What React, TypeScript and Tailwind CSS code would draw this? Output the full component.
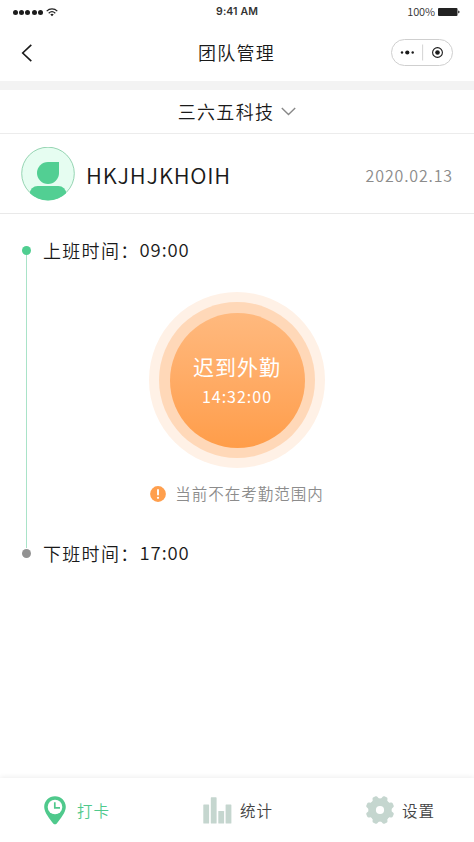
import { useState } from "react";

const TABS = [
    { id: "punch", label: "打卡", icon: PinIcon, pos: "ml-[43px] w-[179px]", gap: "gap-[11px]" },
    { id: "stats", label: "统计", icon: BarsIcon, pos: "-ml-[19px] w-[163px]", gap: "gap-2" },
    { id: "settings", label: "设置", icon: GearIcon, pos: "", gap: "gap-2" },
];

function WifiIcon() {
    return (
        <svg width="12" height="9" viewBox="0 0 12 9" fill="none" stroke="#222" strokeWidth="1.2" className="ml-0.5">
            <path d="M0.7 3.2C3.7 0.2 8.3 0.2 11.3 3.2" />
            <path d="M2.7 5.2C4.6 3.4 7.4 3.4 9.3 5.2" />
            <path d="M4.3 6.4C5.2 5.6 6.8 5.6 7.7 6.4L6 8.3Z" fill="#222" stroke="none" />
        </svg>
    );
}

function PinIcon({ color }) {
    return (
        <svg width="22" height="29" viewBox="0 0 22 29" fill="none" className="ml-px">
            <path d="M11 0.3C5 0.3 0.2 5 0.2 10.9C0.2 16.5 5.8 22.6 9.2 27.4Q11 29.3 12.8 27.4C16.2 22.6 21.8 16.5 21.8 10.9C21.8 5 17 0.3 11 0.3Z" fill={color} />
            <circle cx="11" cy="11" r="7.3" fill="#fff" />
            <path d="M10.8 6.2V11.8H16" stroke={color} strokeWidth="1.7" />
        </svg>
    );
}

function BarsIcon({ color }) {
    return (
        <svg width="29" height="27" viewBox="0 0 29 27" fill={color}>
            <rect x="0.3" y="7.5" width="5.8" height="19" rx="0.6" />
            <rect x="7.8" y="0.3" width="5.8" height="26.2" rx="0.6" />
            <rect x="15.3" y="14" width="5.8" height="12.5" rx="0.6" />
            <rect x="22.6" y="7.5" width="5.8" height="19" rx="0.6" />
        </svg>
    );
}

function GearIcon({ color }) {
    return (
        <svg width="28" height="28" viewBox="-14 -14 28 28" fill={color}>
            <circle r="11.5" />
            {[22.5, 67.5, 112.5, 157.5, 202.5, 247.5, 292.5, 337.5].map((a) => (
                <path key={a} transform={`rotate(${a})`} d="M-4.8 -10Q-3.1 -10.8 -2.8 -12.6Q-2.5 -14.3 -1.1 -14.3H1.1Q2.5 -14.3 2.8 -12.6Q3.1 -10.8 4.8 -10Z" />
            ))}
            <circle r="4.1" fill="#fff" />
        </svg>
    );
}

function Avatar() {
    return (
        <svg width="54" height="54" viewBox="0 0 54 54">
            <defs>
                <clipPath id="avatar-clip"><circle cx="27" cy="27" r="26.4" /></clipPath>
            </defs>
            <circle cx="27" cy="26.5" r="26.3" fill="#e6fdf1" stroke="#7cc9a0" strokeWidth="0.8" />
            <path d="M38 15H27A11 11 0 1 0 38 26Z" fill="#52cf93" />
            <rect x="8.7" y="38.9" width="36.6" height="20" rx="8" fill="#52cf93" clipPath="url(#avatar-clip)" />
        </svg>
    );
}

function StatusBar() {
    return (
        <div className="grid h-6 grid-cols-3 items-center pl-[13px] pr-[14px]">
            <div className="flex items-center gap-[1.2px]">
                {[0, 1, 2, 3, 4].map((i) => (
                    <span key={i} className="h-[5px] w-[5px] rounded-full bg-[#1c1c1c]" />
                ))}
                <WifiIcon />
            </div>
            <div className="pl-px text-center font-[Inter] text-[10.5px] font-semibold tracking-[0.1px] text-[#333]">9:41 AM</div>
            <div className="flex items-center justify-end gap-[3px] text-[11px] leading-3 text-[#333]">
                <span className="-mt-0.5 tracking-[-0.1px]">100%</span>
                <svg width="22" height="8" viewBox="0 0 22 8" fill="#222">
                    <rect width="19.5" height="8" rx="1" />
                    <path d="M20.2 2.6Q21.6 3 21.6 4T20.2 5.4Z" />
                </svg>
            </div>
        </div>
    );
}

function Header() {
    return (
        <header className="grid h-[57px] grid-cols-[80px_1fr_80px] items-center">
            <button type="button" aria-label="返回" className="pl-[21px]">
                <svg width="12" height="18" viewBox="0 0 12 18" fill="none" stroke="#1a1a1a" strokeWidth="1.6">
                    <path d="M10.3 0.8L1.7 9L10.3 17.2" />
                </svg>
            </button>
            <h1 className="pr-px text-center text-[18px] font-[350] tracking-[1.3px] text-[#1a1a1a]">团队管理</h1>
            <div className="-ml-[3px] flex h-[27px] w-[62px] items-center rounded-full border border-[#cfcfcf]">
                <svg width="60" height="25" viewBox="0 0 60 25" fill="#1a1a1a">
                    <circle cx="10" cy="12.5" r="1.2" />
                    <circle cx="15.3" cy="12.5" r="2.1" />
                    <circle cx="20.7" cy="12.5" r="1.2" />
                    <rect x="30.3" y="4.5" width="0.8" height="16" fill="#c8c8c8" />
                    <circle cx="45.5" cy="12.5" r="4.9" fill="none" stroke="#1a1a1a" strokeWidth="1.1" />
                    <circle cx="45.5" cy="12.5" r="2.3" />
                </svg>
            </div>
        </header>
    );
}

function ShiftRow({ label, time, dot }) {
    return (
        <div className="flex h-6 items-center text-[18px] text-[#1a1a1a]">
            <span className={`h-[9px] w-[9px] rounded-full ${dot}`} />
            <span className="ml-3 tracking-[1.3px]">{label}：</span>
            <span className="text-[18.5px] tracking-[0.9px]">{time}</span>
        </div>
    );
}

export default function App() {
    const [active, setActive] = useState("punch");

    return (
        <div className="flex h-[842px] w-[474px] flex-col overflow-hidden bg-white font-['Noto_Sans_CJK_SC',sans-serif] font-[350]">
            <StatusBar />
            <Header />
            <div className="h-[9px] bg-[#f3f3f3]" />

            <button type="button" className="flex h-11 items-center justify-center gap-[7px] border-b border-[#ececec] text-[18px] tracking-[1.3px] text-[#1a1a1a]">
                三六五科技
                <svg width="15" height="9" viewBox="0 0 15 9" fill="none" stroke="#888" strokeWidth="1.4">
                    <path d="M0.8 0.9L7.5 7.6L14.2 0.9" />
                </svg>
            </button>

            <section className="flex h-20 items-center border-b border-[#e9e9e9] pl-[21px] pr-[21px]">
                <Avatar />
                <span className="ml-[11px] mt-0.5 text-[22px] tracking-[0.75px] text-[#1a1a1a]">HKJHJKHOIH</span>
                <span className="ml-auto mt-0.5 text-[16px] tracking-[0.85px] text-[#8c8c8c]">2020.02.13</span>
            </section>

            <main className="flex flex-1 flex-col px-[22px] pt-6">
                <ShiftRow label="上班时间" time="09:00" dot="bg-[#4fce90]" />
                <div className="-my-[7px] ml-1 flex h-[293px] flex-col items-center border-l border-[#a9e3c8] pr-[5px]">
                    <div className="mt-[37px] flex h-[176px] w-[176px] items-center justify-center rounded-full bg-[#fff1e6]">
                        <div className="flex h-[156px] w-[156px] items-center justify-center rounded-full bg-[#ffd8b8]">
                            <button type="button" className="flex h-[135px] w-[135px] flex-col items-center justify-center rounded-full bg-linear-to-b from-[#ffb97e] to-[#ff9d49] pt-px text-white">
                                <span className="text-[21px] leading-[30px] font-normal tracking-[1px]">迟到外勤</span>
                                <span className="text-[16px] leading-[30px] font-normal tracking-[1px]">14:32:00</span>
                            </button>
                        </div>
                    </div>
                    <p className="mt-[14px] flex items-center gap-[9px] text-[15.5px] tracking-[1px] text-[#8c8c8c]">
                        <svg width="16" height="16" viewBox="0 0 16 16">
                            <circle cx="8" cy="8" r="7.9" fill="#ff9f4d" />
                            <path d="M8 4V8.6" stroke="#fff" strokeWidth="1.9" strokeLinecap="round" />
                            <circle cx="8" cy="11.8" r="1.1" fill="#fff" />
                        </svg>
                        当前不在考勤范围内
                    </p>
                </div>
                <ShiftRow label="下班时间" time="17:00" dot="bg-[#929292]" />
            </main>

            <nav className="flex h-16 items-center shadow-[0_-1px_5px_rgba(0,0,0,0.07)]">
                {TABS.map((tab) => {
                    const on = tab.id === active;
                    const Icon = tab.icon;
                    return (
                        <button
                            key={tab.id}
                            type="button"
                            onClick={() => setActive(tab.id)}
                            className={`flex items-center text-[15.5px] tracking-[1px] ${tab.pos} ${tab.gap} ${on ? "text-[#4fc98c]" : "text-[#444]"}`}
                        >
                            <Icon color={on ? "#4fc98c" : "#c5d6cf"} />
                            <span className="mt-px">{tab.label}</span>
                        </button>
                    );
                })}
            </nav>
        </div>
    );
}
